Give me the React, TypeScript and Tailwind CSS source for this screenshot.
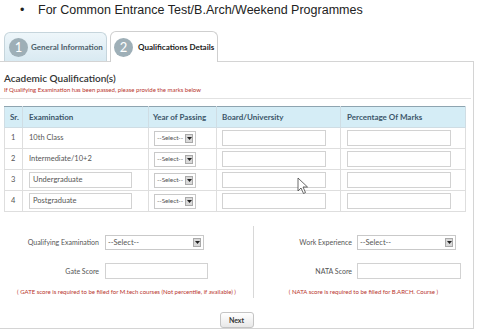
import React from "react";

function Sel({ w, big = false }: { w: string; big?: boolean }) {
  return (
    <div className={`${w} h-[15px] border border-[#c9c9c9] bg-white flex items-center justify-between pl-[2px] pr-[2px]`}>
      <span className={`${big ? "text-[7.5px]" : "text-[6.5px] tracking-[-0.1px]"} text-[#555] leading-none whitespace-nowrap`}>--Select--</span>
      <span className="shrink-0 w-[8px] h-[9px] bg-[#d9d9d9] border border-[#a9a9a9] flex items-center justify-center">
        <svg width="5" height="3" viewBox="0 0 5 3"><path d="M0 0h5L2.5 3z" fill="#222" /></svg>
      </span>
    </div>
  );
}

function Inp({ w }: { w: string }) {
  return <div className={`${w} h-[16px] border border-[#d2d2d2] bg-white`} />;
}

function InpText({ w, text }: { w: string; text: string }) {
  return (
    <div className={`${w} h-[16px] border border-[#d2d2d2] bg-white flex items-center pl-[3px] text-[7.5px] text-[#555]`}>
      {text}
    </div>
  );
}

export default function App() {
  const rows = [
    { n: "1", exam: "10th Class", input: false },
    { n: "2", exam: "Intermediate/10+2", input: false },
    { n: "3", exam: "Undergraduate", input: true },
    { n: "4", exam: "Postgraduate", input: true },
  ];
  return (
    <div className="w-[480px] h-[331px] bg-white overflow-hidden relative font-['Lato',sans-serif]">
      <div className="h-[20px] flex items-center pl-[20px] font-['Liberation_Sans',Arial,sans-serif] text-[12.5px] text-[#222]">
        <span className="w-[18px]">•</span>
        <span>For Common Entrance Test/B.Arch/Weekend Programmes</span>
      </div>

      <div className="mt-[11px] flex items-end pl-[4px] gap-[3px] h-[30px]">
        <div className="h-[29px] w-[103px] rounded-t-[6px] border border-b-0 border-[#c6d5dc] bg-gradient-to-b from-[#eef6fa] to-[#d9eaf2] flex items-center pl-[4px] gap-[3px]">
          <span className="w-[19px] h-[19px] rounded-full bg-[#9eafb7] text-white text-[13px] leading-none flex items-center justify-center">1</span>
          <span className="text-[8px] font-bold text-[#4d5e6a]">General Information</span>
        </div>
        <div className="relative z-10 mb-[-1px] h-[31px] w-[108px] rounded-t-[6px] border border-b-0 border-[#cfcfcf] bg-white flex items-center pl-[3px] gap-[5px]">
          <span className="w-[19px] h-[19px] rounded-full bg-[#9eafb7] text-white text-[13px] leading-none flex items-center justify-center">2</span>
          <span className="text-[8px] font-bold text-[#222]">Qualifications Details</span>
        </div>
      </div>

      <div className="w-[474px] h-[268px] border-t border-r border-b border-[#d4d4d4] flex flex-col">
        <div className="pl-[4px] pt-[11px] text-[10px] font-semibold text-[#333] leading-none">Academic Qualification(s)</div>
        <div className="pl-[4px] pt-[4px] text-[6px] text-[#b8342c] leading-none">If Qualifying Examination has been passed, please provide the marks below</div>
        <div className="mt-[5px] w-[471px] border-t border-[#e2e2e2]" />

        <table className="mt-[7px] ml-[4px] table-fixed border-collapse w-[461px]">
          <thead>
            <tr className="h-[21px] bg-[#d5edf6] text-[8px] font-bold text-[#3c566a] text-left">
              <th className="w-[18px] border border-[#cfdde4] border-t-[#8ea4b0] pl-[5px] font-bold">Sr.</th>
              <th className="w-[126px] border border-[#cfdde4] border-t-[#8ea4b0] pl-[6px] font-bold">Examination</th>
              <th className="w-[68px] border border-[#cfdde4] border-t-[#8ea4b0] pl-[4px] font-bold">Year of Passing</th>
              <th className="w-[124px] border border-[#cfdde4] border-t-[#8ea4b0] pl-[5px] font-bold">Board/University</th>
              <th className="w-[125px] border border-[#cfdde4] border-t-[#8ea4b0] pl-[6px] font-bold">Percentage Of Marks</th>
            </tr>
          </thead>
          <tbody>
            {rows.map((r) => (
              <tr key={r.n} className="h-[21px] text-[7.5px] text-[#555]">
                <td className="border border-[#dedede] pl-[6px]">{r.n}</td>
                <td className="border border-[#dedede] pl-[6px]">
                  {r.input ? <InpText w="w-[103px]" text={r.exam} /> : r.exam}
                </td>
                <td className="border border-[#dedede] pl-[5px]">
                  <Sel w="w-[42px]" />
                </td>
                <td className="border border-[#dedede] pl-[5px]">
                  <Inp w="w-[104px]" />
                </td>
                <td className="border border-[#dedede] pl-[6px]">
                  <Inp w="w-[104px]" />
                </td>
              </tr>
            ))}
          </tbody>
        </table>

        <div className="mt-[14px] flex">
          <div className="w-[254px] border-r border-[#d8d8d8] flex flex-col pt-[9px]">
            <div className="flex items-center h-[15px]">
              <span className="w-[99px] text-right text-[7px] text-[#555]">Qualifying Examination</span>
              <div className="ml-[6px]"><Sel w="w-[99px]" big /></div>
            </div>
            <div className="flex items-center h-[16px] mt-[13px]">
              <span className="w-[99px] text-right text-[7px] text-[#555]">Gate Score</span>
              <div className="ml-[6px]"><Inp w="w-[103px]" /></div>
            </div>
            <div className="mt-[10px] text-center text-[6px] text-[#b8342c] leading-none pb-[3px]">
              ( GATE score is required to be filled for M.tech courses (Not percentile, if available) )
            </div>
          </div>
          <div className="flex-1 flex flex-col pt-[9px]">
            <div className="flex items-center h-[15px]">
              <span className="w-[98px] text-right text-[7px] text-[#555]">Work Experience</span>
              <div className="ml-[5px]"><Sel w="w-[99px]" big /></div>
            </div>
            <div className="flex items-center h-[16px] mt-[13px]">
              <span className="w-[98px] text-right text-[7px] text-[#555]">NATA Score</span>
              <div className="ml-[5px]"><Inp w="w-[104px]" /></div>
            </div>
            <div className="mt-[10px] text-center text-[6px] text-[#b8342c] leading-none">
              ( NATA score is required to be filled for B.ARCH. Course )
            </div>
          </div>
        </div>

        <div className="mt-[14px] flex justify-center">
          <div className="w-[34px] h-[16px] rounded-[3px] border border-[#c4c4c4] bg-gradient-to-b from-white to-[#e8e8e8] flex items-center justify-center text-[7px] font-bold text-[#333]">
            Next
          </div>
        </div>
      </div>

      <svg className="absolute left-[297px] top-[177px]" width="12" height="18" viewBox="0 0 12 18">
        <path d="M1 1 L1 14 L4 11 L6.5 16.5 L8.5 15.5 L6 10 L10.5 10 Z" fill="white" stroke="#444" strokeWidth="0.8" />
      </svg>
    </div>
  );
}
